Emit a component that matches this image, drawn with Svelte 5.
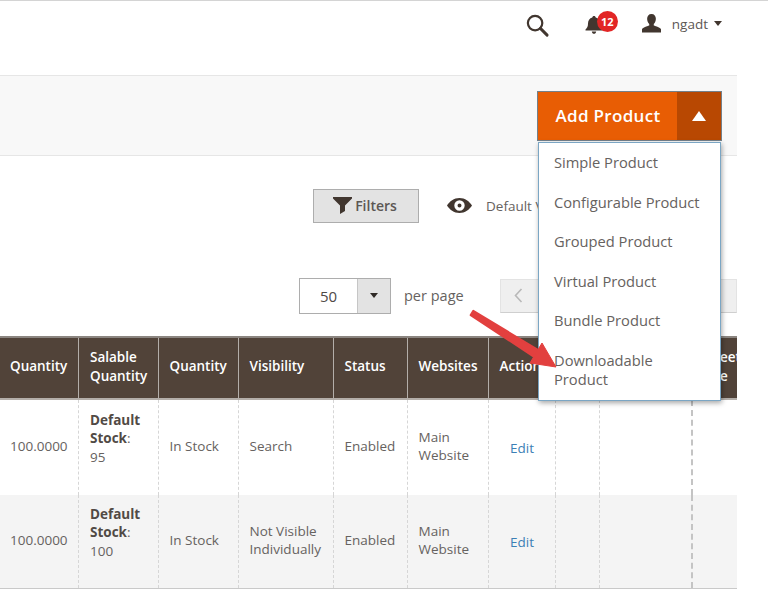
<script>
  const cols = [79, 80, 80, 95, 74, 81, 67, 44, 93, 44];
  const heads = [['Quantity'], ['Salable', 'Quantity'], ['Quantity'], ['Visibility'], ['Status'], ['Websites'], ['Action'], [], [], ['eet', 'e']];
  const rows = [
    { qty: '100.0000', stock: '95', state: 'In Stock', vis: ['Search'], status: 'Enabled' },
    { qty: '100.0000', stock: '100', state: 'In Stock', vis: ['Not Visible', 'Individually'], status: 'Enabled' }
  ];
  const menu = ['Simple Product', 'Configurable Product', 'Grouped Product', 'Virtual Product', 'Bundle Product', 'Downloadable Product'];
</script>

<div class="page">
  <header class="top">
    <svg class="search" width="25" height="25" viewBox="0 0 26 26"><circle cx="10.5" cy="10.5" r="7.5" fill="none" stroke="#41362f" stroke-width="2.3"/><path d="M16 16l7 7" stroke="#41362f" stroke-width="3" stroke-linecap="round"/></svg>
    <div class="bell">
      <svg width="18" height="20" viewBox="0 0 18 20"><path d="M9 1c1 0 1.600.7 1.700 1.500C13.500 3.300 15 5.500 15 8.500c0 3 .8 4.500 2.500 6v1H.5v-1C2.200 13 3 11.500 3 8.500c0-3 1.500-5.200 4.300-6C7.400 1.700 8 1 9 1zM6.800 16.500h4.400C11 18 10.100 18.800 9 18.800S7 18 6.800 16.500z" fill="#41362f"/></svg>
      <span class="badge">12</span>
    </div>
    <div class="user">
      <svg width="21" height="19" viewBox="0 0 22 20"><path d="M11 0c3 0 4.600 2.200 4.600 5 0 2.300-.9 4.300-2.200 5.400v1.600c2.500 1 6.600 1.900 7.600 4V19.500H1V16c1-2.100 5.100-3 7.600-4v-1.600C7.300 9.300 6.400 7.300 6.400 5 6.400 2.200 8 0 11 0z" fill="#41362f"/></svg>
      <span>ngadt</span>
      <i class="caret"></i>
    </div>
  </header>

  <section class="actions">
    <div class="split">
      <span class="add">Add Product</span>
      <span class="toggle"><i></i></span>
    </div>
  </section>

  <section class="tools">
    <button class="filters">
      <svg width="19" height="17" viewBox="0 0 19 17"><path d="M0 0h19v1.500L12 8.500V14l-5 3V8.500L0 1.500z" fill="#41362f"/></svg>
      Filters
    </button>
    <svg class="eye" width="25" height="15" viewBox="0 0 25 15"><path fill-rule="evenodd" d="M12.500 0C18 0 22.500 3.500 25 7.500 22.500 11.500 18 15 12.500 15S2.500 11.500 0 7.500C2.500 3.500 7 0 12.500 0zm0 2.300a5.200 5.200 0 1 0 0 10.400 5.200 5.200 0 0 0 0-10.400zm0 3.200a2 2 0 1 1 0 4 2 2 0 0 1 0-4z" fill="#41362f"/></svg>
    <span class="view">Default View</span>
  </section>

  <section class="pager">
    <div class="select"><span class="num">50</span><span class="sel-btn"><i></i></span></div>
    <span class="per">per page</span>
    <div class="pages">
      <span class="prev"><svg width="9" height="15" viewBox="0 0 9 15"><path d="M7.500 1L1.500 7.500l6 6.500" fill="none" stroke="#b8b8b8" stroke-width="1.600"/></svg></span>
    </div>
  </section>

  <div class="table">
    <div class="grid head">
      {#each heads as h, i}
        <div class="th" style="width:{cols[i]}px">{#each h as line}<span>{line}</span>{/each}</div>
      {/each}
    </div>
    {#each rows as r, ri}
      <div class="grid row" class:alt={ri === 1}>
        <div class="td" style="width:{cols[0]}px">{r.qty}</div>
        <div class="td stock" style="width:{cols[1]}px"><b>Default</b><span><b>Stock</b>:</span><span>{r.stock}</span></div>
        <div class="td" style="width:{cols[2]}px">{r.state}</div>
        <div class="td" style="width:{cols[3]}px">{#each r.vis as v}<span>{v}</span>{/each}</div>
        <div class="td" style="width:{cols[4]}px">{r.status}</div>
        <div class="td" style="width:{cols[5]}px"><span>Main</span><span>Website</span></div>
        <div class="td edit" style="width:{cols[6]}px"><a href="#top">Edit</a></div>
        <div class="td" style="width:{cols[7]}px"></div>
        <div class="td wide" style="width:{cols[8]}px"></div>
        <div class="td last" style="width:{cols[9]}px"></div>
      </div>
    {/each}
  </div>

  <ul class="menu">
    {#each menu as m}<li>{m}</li>{/each}
  </ul>

  <svg class="arrow" width="100" height="70" viewBox="0 0 100 70">
    <path d="M2.700 6.100L5.300 1.900 71.100 41.600 66.900 48.400z" fill="#e2403f" stroke="#e2403f" stroke-width="2" stroke-linejoin="round"/>
    <path d="M74 34L88 58 62 54z" fill="#e2403f" stroke="#e2403f" stroke-width="1" stroke-linejoin="round"/>
  </svg>
</div>

<style>
  :global(body) { margin: 0; background: #fff; }
  .page {
    position: relative; width: 768px; height: 589px; overflow: hidden; box-sizing: border-box;
    border-top: 1px solid #d4d4d4;
    font-family: "Open Sans", "Noto Sans", sans-serif; font-size: 14px; color: #666260;
  }
  i { display: block; }
  .top { height: 74px; position: relative; display: flex; justify-content: flex-end; align-items: flex-start; padding: 11px 46px 0 0; box-sizing: border-box; }
  .search { margin: 1px 35px 0 0; }
  .bell { position: relative; width: 18px; height: 20px; margin: 3px 38px 0 0; }
  .badge {
    position: absolute; left: 12px; top: -4px; width: 21px; height: 21px; border-radius: 50%;
    background: #e22626; color: #fff; font-size: 11px; font-weight: 700; line-height: 21px; text-align: center;
  }
  .user { display: flex; align-items: center; height: 22px; }
  .user span { margin: 1px 0 0 10px; font-size: 13.500px; color: #5c5754; }
  .caret { margin-left: 6px; border: 4px solid transparent; border-top: 5px solid #41362f; border-bottom: 0; }

  .actions {
    width: 737px; height: 81px; box-sizing: border-box; background: #f8f8f8;
    border-top: 1px solid #e6e6e6; border-bottom: 1px solid #e6e6e6;
    display: flex; justify-content: flex-end; padding: 15px 15px 0 0;
  }
  .split { display: flex; width: 185px; height: 50px; box-sizing: border-box; border: 1px solid #74808a; }
  .add { width: 138px; padding-left: 1px; background: #e85d04; color: #fff; font-weight: 600; font-size: 17px; letter-spacing: .3px; line-height: 47px; text-align: center; }
  .toggle { flex: 1; background: #b84802; display: flex; align-items: center; justify-content: center; }
  .toggle i { border: 7px solid transparent; border-bottom: 10px solid #fff; border-top: 0; }

  .tools { display: flex; align-items: center; height: 66px; padding: 33px 0 0 313px; box-sizing: border-box; }
  .filters {
    width: 106px; height: 34px; box-sizing: border-box; background: #e3e3e3; border: 1px solid #adadad; margin: 0;
    display: flex; align-items: center; justify-content: center; gap: 3px; padding: 0 2px 0 0;
    font: 600 14px "Open Sans", sans-serif; color: #5c5754;
  }
  .eye { margin-left: 28px; }
  .view { margin-left: 14px; font-size: 13.500px; white-space: nowrap; width: 52px; overflow: hidden; }

  .pager { display: flex; align-items: center; height: 35px; margin-top: 56px; padding-left: 299px; }
  .select { display: flex; width: 92px; height: 36px; box-sizing: border-box; border: 1px solid #adadad; }
  .num { width: 57px; text-align: center; line-height: 34px; font-size: 15px; color: #4f4a46; }
  .sel-btn { flex: 1; background: #e3e3e3; border-left: 1px solid #c6c6c6; display: flex; align-items: center; justify-content: center; }
  .sel-btn i { border: 4px solid transparent; border-top: 5px solid #2f2a26; border-bottom: 0; }
  .per { margin-left: 13px; font-size: 14.500px; }
  .pages { margin-left: 36px; width: 237px; height: 34px; box-sizing: border-box; background: #efefef; border: 1px solid #e3e3e3; border-bottom-color: #cfcfcf; display: flex; align-items: center; }
  .prev { display: flex; margin-left: 13px; }

  .table { margin-top: 23px; width: 737px; border-bottom: 1px solid #c9c9c9; }
  .grid { display: flex; }
  .head { height: 64px; box-sizing: border-box; background: #514339; border-top: 2px solid #8b8580; border-bottom: 2px solid #b3aea9; }
  .th {
    box-sizing: border-box; padding: 0 0 3px 10.500px; border-right: 1px solid #b3aea9;
    display: flex; flex-direction: column; justify-content: center;
    color: #fff; font-weight: 600; font-size: 13.500px; line-height: 19px; white-space: nowrap; overflow: hidden;
  }
  .th:first-child, .td:first-child { padding-left: 10px; }
  .th:nth-child(2), .td:nth-child(2) { padding-left: 11px; }
  .th:last-child { border-right: 0; padding-left: 27px; }
  .row { height: 95px; }
  .row.alt { height: 93px; background: #f4f4f4; }
  .td {
    box-sizing: border-box; padding: 0 0 3px 10.500px; border-right: 1px dashed #d6d6d6;
    display: flex; flex-direction: column; justify-content: center; align-items: flex-start;
    line-height: 18.200px; font-size: 13.500px;
  }
  .td.stock { padding-bottom: 18px; }
  .td b { font-weight: 700; color: #514a45; }
  .td.edit { padding: 1px 0 0 21px; }
  .td.edit a { color: #3c7fb5; text-decoration: none; }
  .td.wide { border-right: 2px dashed #c4c4c4; }
  .td.last { border-right: 0; }

  .menu {
    position: absolute; left: 538px; top: 141px; width: 183px; height: 259px; box-sizing: border-box; margin: 0; padding: 0; list-style: none;
    background: #fff; border: 1px solid #7ba6c4; box-shadow: 1px 2px 5px rgba(0, 0, 0, .35);
  }
  .menu li { padding: 10px 15px 10px; line-height: 19.500px; font-size: 14.700px; color: #666260; }
  .arrow { position: absolute; left: 468px; top: 308px; }
</style>
